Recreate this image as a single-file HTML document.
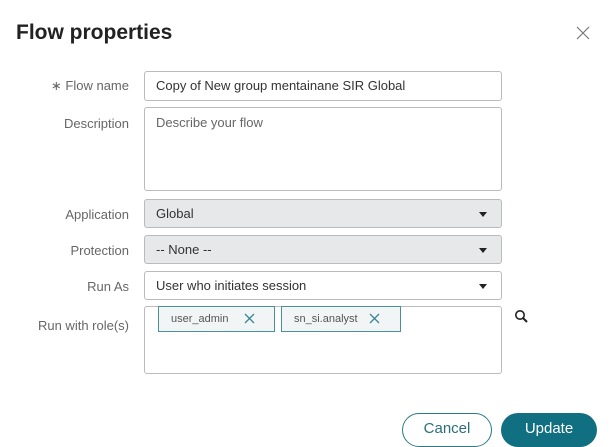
<!DOCTYPE html>
<html><head><style>
body{margin:0;width:612px;height:437px;background:#fff;font-family:"Liberation Sans",sans-serif;position:relative;overflow:hidden;color:#333}
.a{position:absolute}
.lbl{position:absolute;right:483px;font-size:13px;color:#666;text-align:right;white-space:nowrap}
.in{position:absolute;left:144px;width:358px;border:1px solid #bbb;border-radius:3px;box-sizing:border-box;font-size:13px;color:#333;padding-left:11px}
.grey{background:#e6e8ea}
.car{position:absolute;right:14px;top:12px;width:0;height:0;border-left:4px solid transparent;border-right:4px solid transparent;border-top:5px solid #222}
.tag{position:absolute;top:306px;height:26px;box-sizing:border-box;border:1px solid #4a8f99;background:#f1f5f6;font-size:11px;color:#555;padding:0 0 0 12px;line-height:24px}
.tag svg{position:absolute;top:6px}
</style></head><body>
<div class="a" style="left:16px;top:21px;font-size:21px;font-weight:bold;color:#222">Flow properties</div>
<svg class="a" style="left:576px;top:26px" width="14" height="14"><path d="M1 1L13 13M13 1L1 13" stroke="#777" stroke-width="1.2"/></svg>

<div class="lbl" style="top:78px"><span style="color:#666">∗</span> Flow name</div>
<div class="in" style="top:71px;height:30px;line-height:28px">Copy of New group mentainane SIR Global</div>
<div class="lbl" style="top:116px">Description</div>
<div class="in" style="top:107px;height:84px;padding-top:7px;color:#666">Describe your flow</div>
<div class="lbl" style="top:207px">Application</div>
<div class="in grey" style="top:199px;height:29px;line-height:27px">Global<div class="car"></div></div>
<div class="lbl" style="top:243px">Protection</div>
<div class="in grey" style="top:235px;height:29px;line-height:27px">-- None --<div class="car"></div></div>
<div class="lbl" style="top:279px">Run As</div>
<div class="in" style="top:271px;height:29px;line-height:27px">User who initiates session<div class="car"></div></div>
<div class="lbl" style="top:318px">Run with role(s)</div>
<div class="in" style="top:306px;height:68px"></div>
<div class="tag" style="left:158px;width:117px">user_admin<svg style="left:85px" width="11" height="11"><path d="M1 1L10 10M10 1L1 10" stroke="#3a8894" stroke-width="1.3"/></svg></div>
<div class="tag" style="left:281px;width:120px">sn_si.analyst<svg style="left:87px" width="11" height="11"><path d="M1 1L10 10M10 1L1 10" stroke="#3a8894" stroke-width="1.3"/></svg></div>
<svg class="a" style="left:514px;top:309px" width="16" height="16"><circle cx="6" cy="6" r="4.2" fill="none" stroke="#222" stroke-width="1.6"/><line x1="9" y1="9" x2="13" y2="13" stroke="#222" stroke-width="2"/></svg>

<div class="a" style="left:402px;top:413px;width:90px;height:34px;box-sizing:border-box;border:1px solid #2b7a86;border-radius:17px;text-align:center;line-height:30px;font-size:15px;color:#2b6e7a">Cancel</div>
<div class="a" style="left:501px;top:413px;width:96px;height:34px;border-radius:17px;background:#106f80;text-align:center;line-height:32px;font-size:15px;color:#fff">Update</div>
</body></html>
